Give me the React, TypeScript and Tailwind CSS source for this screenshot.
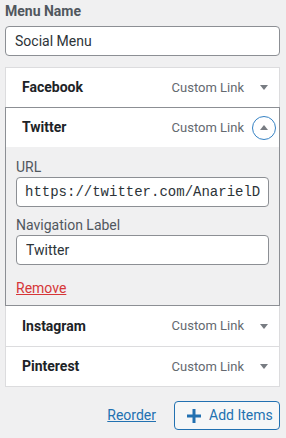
const font = { fontFamily: 'Roboto, "Noto Sans", sans-serif' };

function Arrow({ up = false }: { up?: boolean }) {
  return (
    <svg width="8" height="5" viewBox="0 0 8 5" className="block">
      {up ? <path d="M0 5 L4 0 L8 5 Z" fill="#787c82" /> : <path d="M0 0 L8 0 L4 5 Z" fill="#787c82" />}
    </svg>
  );
}

function PlusIcon() {
  return (
    <svg width="14" height="14" viewBox="0 0 14 14" className="block">
      <rect x="5.5" y="0" width="3" height="14" fill="#2271b1" />
      <rect x="0" y="5.5" width="14" height="3" fill="#2271b1" />
    </svg>
  );
}

interface RowProps {
  title: string;
  open?: boolean;
}

function ItemHeader({ title, open = false }: RowProps) {
  return (
    <div className="flex items-center h-[39px] pl-4 pr-[3px] bg-white">
      <div className="flex-1 text-[14px] font-bold text-[#1d2327]">{title}</div>
      <div className="text-[13px] text-[#646970]">Custom Link</div>
      <div
        className={`ml-[8px] w-6 h-6 rounded-full flex items-center justify-center ${
          open ? 'border border-[#3582c4]' : ''
        }`}
      >
        <Arrow up={open} />
      </div>
    </div>
  );
}

export default function App() {
  return (
    <div className="w-[286px] h-[438px] bg-[#f0f0f1] pl-[5px] pr-[6px] pt-[1px]" style={font}>
      <div className="text-[14px] leading-5 font-bold text-[#50575e]">Menu Name</div>
      <input
        readOnly
        value="Social Menu"
        className="mt-[5px] w-full h-[30px] px-[9px] border border-[#8c8f94] rounded-[4px] bg-white text-[14px] text-[#2c3338] outline-none"
        style={font}
      />

      <div className="mt-[11px]">
        <div className="border border-[#dcdcde]">
          <ItemHeader title="Facebook" />
        </div>
        <div className="-mt-px border border-[#8c8f94]">
          <ItemHeader title="Twitter" open />
          <div className="bg-[#f0f0f1] px-[10px] pt-[10px] pb-[7px]">
            <div className="text-[14px] leading-5 text-[#50575e]">URL</div>
            <input
              readOnly
              value="https://twitter.com/AnarielDesign"
              className="w-full h-[30px] px-[8px] border border-[#8c8f94] rounded-[4px] bg-white text-[14px] text-[#2c3338] outline-none"
              style={{ fontFamily: '"Liberation Mono", "DejaVu Sans Mono", monospace' }}
            />
            <div className="mt-[8px] text-[14px] leading-5 text-[#50575e]">Navigation Label</div>
            <input
              readOnly
              value="Twitter"
              className="w-full h-[30px] px-[9px] border border-[#8c8f94] rounded-[4px] bg-white text-[14px] text-[#2c3338] outline-none"
              style={font}
            />
            <div className="mt-[13px] text-[14px] leading-5">
              <a className="text-[#d63638] underline">Remove</a>
            </div>
          </div>
        </div>
        <div className="border-x border-b border-[#dcdcde] [&>div]:h-[40px]">
          <ItemHeader title="Instagram" />
        </div>
        <div className="border-x border-b border-[#dcdcde] [&>div]:h-[39px]">
          <ItemHeader title="Pinterest" />
        </div>
      </div>

      <div className="mt-[14px] flex items-center justify-end gap-[18px]">
        <a className="text-[14px] text-[#2271b1] underline">Reorder</a>
        <button className="flex items-center h-[29px] w-[106px] pl-[12px] border border-[#2271b1] rounded-[4px] bg-[#f6f7f7] text-[14px] text-[#2271b1]">
          <PlusIcon />
          <span className="ml-[8px]">Add Items</span>
        </button>
      </div>
    </div>
  );
}
